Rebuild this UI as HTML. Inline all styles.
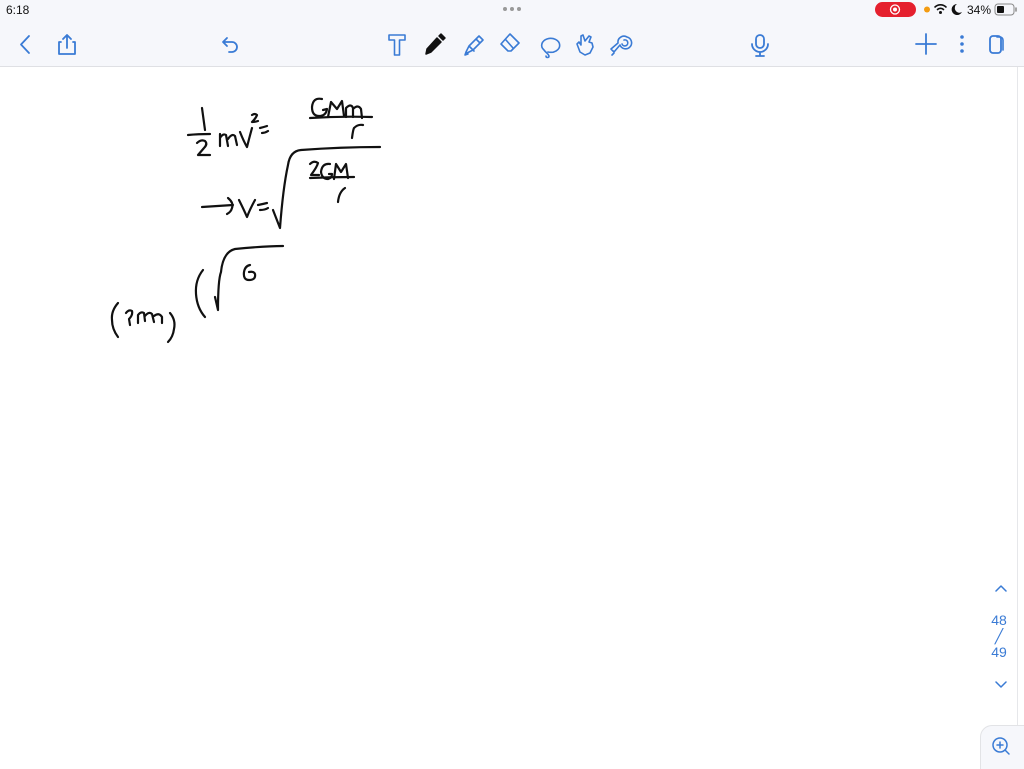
<!DOCTYPE html>
<html><head><meta charset="utf-8"><style>
body{margin:0;width:1024px;height:768px;overflow:hidden;background:#fff;font-family:"Liberation Sans",sans-serif;position:relative}
.top{position:absolute;left:0;top:0;width:1024px;height:66px;background:#f6f7fb;border-bottom:1px solid #dfe0e4}
.t{position:absolute;font-size:12px;color:#111}
svg{position:absolute;left:0;top:0}
.pg{position:absolute;right:0;width:48px;text-align:center;color:#3a7bd5;font-size:14px;line-height:16px}
</style></head><body>
<div class="top"></div>
<div class="t" style="left:6px;top:3px">6:18</div>
<div class="t" style="left:967px;top:3px">34%</div>
<div style="position:absolute;left:1017px;top:67px;width:1px;height:701px;background:#e6e7ea"></div>
<div style="position:absolute;left:980px;top:725px;width:44px;height:43px;background:#f6f7fb;border-top-left-radius:12px;border:1px solid #e2e3e6;border-right:none;border-bottom:none"></div>
<div class="pg" style="top:612px;right:1px">48<br>╱<br>49</div>
<svg width="1024" height="768" viewBox="0 0 1024 768" fill="none" stroke-linecap="round" stroke-linejoin="round">
<g fill="#999"><circle cx="505" cy="9" r="2"/><circle cx="512" cy="9" r="2"/><circle cx="519" cy="9" r="2"/></g>
<rect x="875" y="2" width="41" height="15" rx="7.5" fill="#e5202e"/>
<circle cx="895" cy="9.5" r="4.5" stroke="#fff" stroke-width="1.3"/><circle cx="895" cy="9.5" r="2" fill="#fff"/>
<circle cx="927" cy="9.5" r="3" fill="#f39c12"/>
<path d="M935 7a8 8 0 0 1 11 0M937.5 9.5a4.5 4.5 0 0 1 6 0" stroke="#111" stroke-width="1.6"/><circle cx="940.5" cy="12.5" r="1.5" fill="#111"/>
<path d="M957 4a5.5 5.5 0 1 0 5 8a4.5 4.5 0 0 1-5-8z" fill="#111"/>
<rect x="995" y="4" width="19" height="11" rx="3" stroke="#888" stroke-width="1"/><rect x="997" y="6" width="7" height="7" rx="1" fill="#111"/><path d="M1016 8v3" stroke="#888" stroke-width="1.5"/>
<g stroke="#3a7bd5" stroke-width="1.8">
<path d="M29 36l-8 8.5 8 8.5"/>
<path d="M61 42h-2v12h16v-12h-2M67 35v13M63 39l4-4 4 4"/>
<path d="M227 38l-4 4 4 4M223 42h9a5 5 0 0 1 0 10h-3"/>
<path d="M389 35h16v5h-5.5v15h-5v-15h-5.5z" stroke-width="1.6"/>
<path d="M466 52l3-6 10-10 4 4-10 10-6 3zM466 52l-1 3 3-1M469 46l5 5M476 39l4 4" stroke-width="1.6"/>
<path d="M510 34l9 9-8 8h-3l-7-7zM506 40l7 8" stroke-width="1.6"/>
<path d="M548 52a9 7 0 1 0-4-2c2 3 4 3 5 6 0 2-3 2-3 0" stroke-width="1.6"/>
<path d="M580 52l-3-8 2-2 2 3v-9l2-1 2 6 4-5 2 1-2 5 3 1 1 4-3 6-5 2z" stroke-width="1.6"/>
<path d="M627 37a6 6 0 1 1-7 8l-6 7-3-3 7-6a6 6 0 0 1 9-6zM624 40a3 3 0 1 1-2 4M612 55l2-2" stroke-width="1.6"/>
<rect x="756" y="35" width="8" height="13" rx="4"/><path d="M752 44a8 8 0 0 0 16 0M760 52v4M756 56h8"/>
<path d="M926 34v20M916 44h20"/>
<path d="M997 37h3a3 3 0 0 1 3 3v10" stroke-width="1.6"/><rect x="990" y="36" width="11" height="17" rx="3"/>
</g>
<g fill="#3a7bd5"><circle cx="962" cy="37" r="1.8"/><circle cx="962" cy="44" r="1.8"/><circle cx="962" cy="51" r="1.8"/></g>
<path d="M437 38l4 4-10 10-5 2 1-5z M439 36l2-2 4 4-2 2z" fill="#111" stroke="#111" stroke-width="1.5"/>
<g stroke="#3a7bd5" stroke-width="1.5"><path d="M996 591l5-5 5 5M996 682l5 5 5-5"/><circle cx="1000" cy="745" r="7"/><path d="M1005 750l4 4M997 745h6M1000 742v6"/></g>
<g stroke="#111" stroke-width="2.2">
<path d="M202 108l3 22"/>
<path d="M188 135q10-1 22-1"/>
<path d="M197 143q4-4 8-2 3 3-1 7l-6 7q6 0 12 0"/>
<path d="M220 146l0-12M220 138q3-5 6-3l2 11M228 139q4-6 7-3l2 9"/>
<path d="M240 132q4 10 7 15q2-8 5-19"/>
<path d="M252 115q3-2 5 0-1 3-5 7q3 0 6-1"/>
<path d="M260 128q4-1 7-2M262 133q3 0 6-2"/>
<path d="M322 99q-9-2-10 8 0 9 7 9 7 0 8-7l-4 1"/>
<path d="M328 117l3-15 6 7 5-8 2 15M346 117v-9q5-5 7 0v9M353 109q5-5 8 0l1 9"/>
<path d="M310 118q30-2 62-1"/>
<path d="M352 138q1-8 2-10q4-4 9-3"/>
<path d="M202 207q16-1 31-2M228 198q6 5 4 10-1 4-5 6"/>
<path d="M239 200q5 10 8 17q3-8 8-17"/>
<path d="M258 205q5-1 9-2M260 210q5 0 8-2"/>
<path d="M273 210l7 18q3-40 8-63q2-14 13-15q40-3 79-3"/>
<path d="M310 164q4-4 8-1-1 4-7 12h8"/>
<path d="M330 164q-8-1-9 8 1 7 7 7 4-1 4-5h-3M334 179l2-15 5 8 5-8 2 14"/>
<path d="M310 178q22-1 44-1"/>
<path d="M338 202q1-10 7-14"/>
<path d="M118 303q-7 8-6 17 0 9 6 17"/>
<path d="M126 313q3-4 6-2 1 4-3 8l1 6"/>
<path d="M138 323v-8q3-4 6-2l1 8M145 316q4-5 7-2l2 8M154 316q5-4 8 1v6"/>
<path d="M170 313q6 7 4 16-1 8-6 13"/>
<path d="M203 270q-8 10-7 24 1 14 9 23"/>
<path d="M215 297l3 13q0-30 3-38q2-20 14-23q30-3 48-3"/>
<path d="M250 265q-5 1-6 7-1 8 5 8 7 0 6-6-1-3-6-2"/>
</g>
</svg>
</body></html>
